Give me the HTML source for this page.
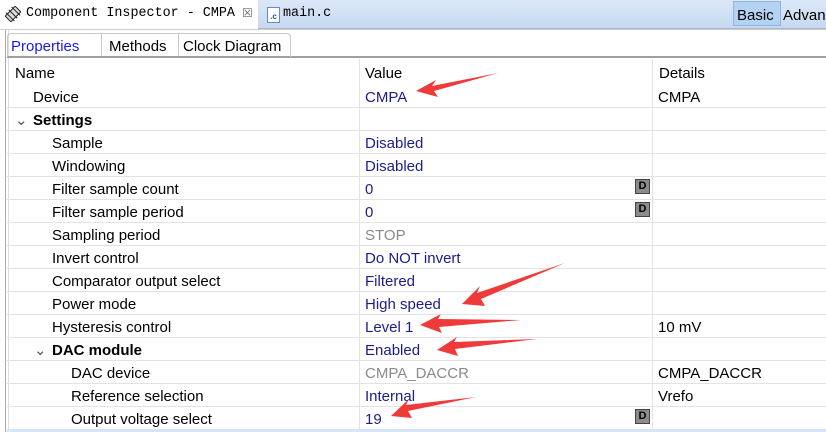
<!DOCTYPE html>
<html><head><style>
body{margin:0;width:826px;height:432px;overflow:hidden;background:#fff;font-family:"Liberation Sans","Noto Sans CJK SC",sans-serif;position:relative}
.a{position:absolute;white-space:nowrap}
.t{font-size:15px;color:#000;line-height:23px;margin-top:1px}
.v{color:#1c1c8a}
.g{color:#8a8a8a}
.b{font-weight:bold}
.hl{position:absolute;left:7px;width:819px;height:1px;background:#e3e3e3}
.D{position:absolute;width:13px;height:13px;background:#8c8c8c;border:1px solid #444;color:#000;font:bold 11px "Liberation Sans",sans-serif;text-align:center;line-height:13px}
</style></head><body>
<div class="a" style="left:0;top:0;width:826px;height:28px;background:linear-gradient(#dce8f7,#c6d9f1);border-bottom:1px solid #a9b7c9"></div>
<div class="a" style="left:0;top:0;width:258px;height:29px;background:#fff"></div>
<svg class="a" style="left:5px;top:6px" width="16" height="16"><g transform="rotate(45 8 8)"><rect x="4" y="1" width="8" height="14" fill="#ddd" stroke="#222"/><line x1="2" y1="4" x2="14" y2="4" stroke="#222"/><line x1="2" y1="8" x2="14" y2="8" stroke="#222"/><line x1="2" y1="12" x2="14" y2="12" stroke="#222"/></g></svg>
<div class="a" style="left:26px;top:6px;font:13.4px 'Liberation Mono',monospace;color:#000">Component Inspector - CMPA</div>
<div class="a" style="left:242px;top:6px;font-size:12px;color:#666">☒</div>
<div class="a" style="left:267px;top:7px;width:11px;height:14px;border:1px solid #6a8bb5;background:#fff;font:bold 8px sans-serif;color:#2050a0;text-align:center;line-height:18px">.c</div>
<div class="a" style="left:283px;top:6px;font:13.4px 'Liberation Mono',monospace;color:#000">main.c</div>
<div class="a" style="left:733px;top:1px;width:46px;height:23px;background:#b4d2f2;border:1px solid #8bb6e6"></div>
<div class="a t" style="left:737px;top:3px">Basic</div>
<div class="a t" style="left:783px;top:3px">Advan</div>
<div class="a" style="left:0;top:29px;width:826px;height:1px;background:#ccc"></div>
<div class="a" style="left:5px;top:30px;width:2px;height:402px;border-left:1px solid #aaa;border-right:1px solid #ddd"></div>
<div class="a" style="left:7px;top:56px;width:819px;height:2px;background:#a0a0a0"></div>
<div class="a" style="left:7px;top:33px;width:282px;height:23px;border:1px solid #c8c8c8;border-bottom:none;border-radius:4px 4px 0 0"></div>
<div class="a" style="left:101px;top:33px;width:1px;height:23px;background:#c8c8c8"></div>
<div class="a" style="left:178px;top:33px;width:1px;height:23px;background:#c8c8c8"></div>
<div class="a t" style="left:11px;top:34px;color:#1a1aee">Properties</div>
<div class="a t" style="left:109px;top:34px">Methods</div>
<div class="a t" style="left:183px;top:34px">Clock Diagram</div>
<div class="a" style="left:359px;top:59px;width:1px;height:370px;background:#e3e3e3"></div>
<div class="a" style="left:652px;top:59px;width:1px;height:370px;background:#e3e3e3"></div>
<div class="hl" style="top:107px"></div><div class="hl" style="top:130px"></div><div class="hl" style="top:153px"></div><div class="hl" style="top:176px"></div><div class="hl" style="top:199px"></div><div class="hl" style="top:222px"></div><div class="hl" style="top:245px"></div><div class="hl" style="top:268px"></div><div class="hl" style="top:291px"></div><div class="hl" style="top:314px"></div><div class="hl" style="top:337px"></div><div class="hl" style="top:360px"></div><div class="hl" style="top:383px"></div><div class="hl" style="top:406px"></div>
<div class="a" style="left:7px;top:429px;width:819px;height:3px;background:#d5e6f7"></div>
<div class="a t" style="left:15px;top:61px">Name</div><div class="a t" style="left:365px;top:61px">Value</div><div class="a t" style="left:659px;top:61px">Details</div>
<div class="a t" style="left:33px;top:85px">Device</div><div class="a t v" style="left:365px;top:85px">CMPA</div><div class="a t" style="left:658px;top:85px">CMPA</div>
<div class="a t" style="left:15px;top:108px;color:#555">⌄</div><div class="a t b" style="left:33px;top:108px">Settings</div>
<div class="a t" style="left:52px;top:131px">Sample</div><div class="a t v" style="left:365px;top:131px">Disabled</div>
<div class="a t" style="left:52px;top:154px">Windowing</div><div class="a t v" style="left:365px;top:154px">Disabled</div>
<div class="a t" style="left:52px;top:177px">Filter sample count</div><div class="a t v" style="left:365px;top:177px">0</div><div class="D" style="left:635px;top:179px">D</div>
<div class="a t" style="left:52px;top:200px">Filter sample period</div><div class="a t v" style="left:365px;top:200px">0</div><div class="D" style="left:635px;top:202px">D</div>
<div class="a t" style="left:52px;top:223px">Sampling period</div><div class="a t g" style="left:365px;top:223px">STOP</div>
<div class="a t" style="left:52px;top:246px">Invert control</div><div class="a t v" style="left:365px;top:246px">Do NOT invert</div>
<div class="a t" style="left:52px;top:269px">Comparator output select</div><div class="a t v" style="left:365px;top:269px">Filtered</div>
<div class="a t" style="left:52px;top:292px">Power mode</div><div class="a t v" style="left:365px;top:292px">High speed</div>
<div class="a t" style="left:52px;top:315px">Hysteresis control</div><div class="a t v" style="left:365px;top:315px">Level 1</div><div class="a t" style="left:658px;top:315px">10 mV</div>
<div class="a t" style="left:34px;top:338px;color:#555">⌄</div><div class="a t b" style="left:52px;top:338px">DAC module</div><div class="a t v" style="left:365px;top:338px">Enabled</div>
<div class="a t" style="left:71px;top:361px">DAC device</div><div class="a t g" style="left:365px;top:361px">CMPA_DACCR</div><div class="a t" style="left:658px;top:361px">CMPA_DACCR</div>
<div class="a t" style="left:71px;top:384px">Reference selection</div><div class="a t v" style="left:365px;top:384px">Internal</div><div class="a t" style="left:658px;top:384px">Vrefo</div>
<div class="a t" style="left:71px;top:407px">Output voltage select</div><div class="a t v" style="left:365px;top:407px">19</div><div class="D" style="left:635px;top:409px">D</div>
<svg class="a" style="left:0;top:0" width="826" height="432"><g fill="#f03a3a">
<polygon points="498,73 432,86 436,80 416,91 438,97 434,91"/>
<polygon points="565,263 477,293 480,286 462,304 485,306 481,299"/>
<polygon points="521,320 438,319 441,314 420,325 442,333 439,327"/>
<polygon points="537,339 454,342 457,337 437,350 458,356 455,349"/>
<polygon points="476,397 406,405 409,399 391,416 412,418 408,411"/>
</g></svg>
</body></html>
